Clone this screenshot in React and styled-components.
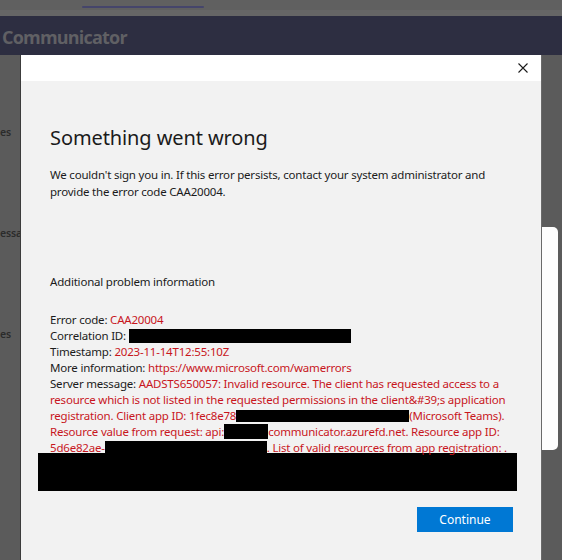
import styled, { createGlobalStyle } from "styled-components";

const GlobalStyle = createGlobalStyle`
  html, body {
    margin: 0;
    padding: 0;
    background: #5b5b5b;
  }
  body {
    font-family: "Segoe UI", "Noto Sans", "Open Sans", sans-serif;
    overflow: hidden;
  }
`;

export default function App() {
  return (
    <>
      <GlobalStyle />
      <Page>
        <TopStrip>
          <TabLine />
        </TopStrip>
        <Header>
          <AppName>Communicator</AppName>
        </Header>
        <Workspace>
          <SideList>
            <SideLabel top={70}>es</SideLabel>
            <SideLabel top={87}>essa</SideLabel>
            <SideLabel top={87}>es</SideLabel>
          </SideList>
          <RightCard />
        </Workspace>

        <Dialog>
          <DialogHeader>
            <CloseButton aria-label="Close">
              <svg width="10" height="10" viewBox="0 0 10 10">
                <path d="M0.5 0.5 L9.5 9.5 M9.5 0.5 L0.5 9.5" stroke="#1b1b1b" strokeWidth="1.1" fill="none" />
              </svg>
            </CloseButton>
          </DialogHeader>
          <DialogBody>
            <Title>Something went wrong</Title>
            <Message>
              We couldn't sign you in. If this error persists, contact your system administrator and
              <br />
              provide the error code CAA20004.
            </Message>
            <SectionTitle>Additional problem information</SectionTitle>
            <Details>
              <Line>
                Error code: <Red>CAA20004</Red>
              </Line>
              <Line>
                Correlation ID: <Redact w={222} h={14} />
              </Line>
              <Line>
                Timestamp: <Red>2023-11-14T12:55:10Z</Red>
              </Line>
              <Line>
                More information: <Red>https://www.microsoft.com/wamerrors</Red>
              </Line>
              <Line>
                Server message: <Red>AADSTS650057: Invalid resource. The client has requested access to a</Red>
              </Line>
              <Line>
                <Red>resource which is not listed in the requested permissions in the client&amp;#39;s application</Red>
              </Line>
              <Line>
                <Red>registration. Client app ID: 1fec8e78</Red>
                <Redact w={173} h={12} />
                <Red>(Microsoft Teams).</Red>
              </Line>
              <Line>
                <Red>Resource value from request: api:</Red>
                <Redact w={44} h={15} />
                <Red>communicator.azurefd.net. Resource app ID:</Red>
              </Line>
              <Line>
                <Red>5d6e82ae-</Red>
                <Redact w={162} h={14} />
                <Red>. List of valid resources from app registration: .</Red>
              </Line>
            </Details>
            <RedactBlock />
            <Footer>
              <PrimaryButton>Continue</PrimaryButton>
            </Footer>
          </DialogBody>
        </Dialog>
      </Page>
    </>
  );
}

const Page = styled.div`
  position: relative;
  width: 562px;
  height: 560px;
  overflow: hidden;
  background: #5b5b5b;
`;

const TopStrip = styled.div`
  height: 16px;
  background: linear-gradient(#606060 0 10px, #666 10px 16px);
  padding-left: 82px;
  box-sizing: border-box;
  padding-top: 6px;
`;

const TabLine = styled.div`
  width: 122px;
  height: 2px;
  background: #45456b;
  border-radius: 1px;
`;

const Header = styled.div`
  height: 39px;
  background: #2d2e41;
  display: flex;
  align-items: center;
  padding-left: 2px;
`;

const AppName = styled.span`
  font-family: "Open Sans", "Noto Sans", sans-serif;
  font-weight: 700;
  font-size: 18px;
  color: #606064;
  letter-spacing: -0.8px;
  margin-top: 2px;
`;

const Workspace = styled.div`
  display: flex;
  justify-content: space-between;
  height: 505px;
`;

const SideList = styled.div`
  display: flex;
  flex-direction: column;
`;

const SideLabel = styled.span`
  margin-top: ${(p) => p.top}px;
  font-size: 10.5px;
  font-weight: 600;
  color: #2b2b2b;
  line-height: 14px;
  letter-spacing: -0.2px;
`;

const RightCard = styled.div`
  margin-top: 172px;
  margin-right: 4px;
  width: 24px;
  height: 223px;
  background: #fdfdfd;
  border-radius: 0 5px 5px 0;
`;

const Dialog = styled.div`
  position: absolute;
  left: 20px;
  top: 55px;
  width: 520px;
  height: 520px;
  background: #f2f2f2;
  border-left: 1px solid #3c3c3c;
  border-right: 1px solid #6a6a6a;
  display: flex;
  flex-direction: column;
`;

const DialogHeader = styled.div`
  height: 26px;
  background: #fff;
  display: flex;
  justify-content: flex-end;
  align-items: center;
  padding-right: 13px;
`;

const CloseButton = styled.button`
  border: 0;
  background: none;
  padding: 0;
  width: 10px;
  height: 10px;
  display: flex;
`;

const DialogBody = styled.div`
  padding: 44px 0 0 29px;
  color: #1b1b1b;
  font-size: 11.5px;
  letter-spacing: -0.2px;
`;

const Title = styled.h1`
  margin: 0;
  font-weight: 400;
  font-size: 20px;
  line-height: 26px;
  letter-spacing: -0.1px;
`;

const Message = styled.p`
  margin: 15px 0 0;
  line-height: 17px;
  white-space: nowrap;
`;

const SectionTitle = styled.p`
  margin: 74px 0 0;
  line-height: 16px;
`;

const Details = styled.div`
  margin-top: 22px;
  line-height: 16px;
`;

const Line = styled.div`
  white-space: nowrap;
  height: 16px;
`;

const Red = styled.span`
  color: #c8161d;
`;

const Redact = styled.span`
  display: inline-block;
  vertical-align: middle;
  margin-top: -2px;
  width: ${(p) => p.w}px;
  height: ${(p) => p.h}px;
  background: #000;
`;

const RedactBlock = styled.div`
  margin: -3px 0 0 -12px;
  width: 479px;
  height: 38px;
  background: #000;
`;

const Footer = styled.div`
  display: flex;
  justify-content: flex-end;
  padding-right: 28px;
  margin-top: 16px;
`;

const PrimaryButton = styled.button`
  width: 96px;
  height: 25px;
  border: 0;
  background: #0078d4;
  color: #fff;
  font-family: "Segoe UI", "Noto Sans", "Open Sans", sans-serif;
  font-size: 12px;
  padding: 0;
`;
